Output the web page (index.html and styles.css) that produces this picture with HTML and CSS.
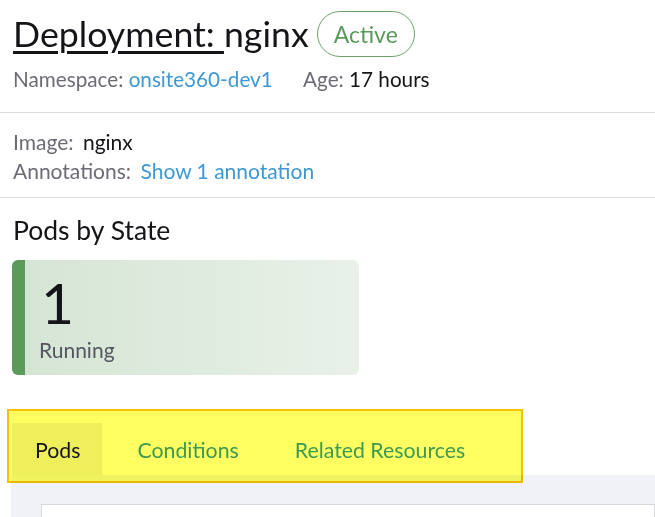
FILE: index.html
```html
<!DOCTYPE html>
<html>
<head>
<meta charset="utf-8">
<link rel="stylesheet" href="styles.css">
</head>
<body>
<div class="page">
  <header class="head">
    <h1 class="title"><a class="kind" href="#">Deployment: </a>nginx</h1>
    <span class="badge">Active</span>
  </header>
  <div class="meta">
    <span class="lbl">Namespace:</span> <a class="link" href="#">onsite360-dev1</a>
    <span class="lbl age">Age:</span> <span class="val">17 hours</span>
  </div>
  <div class="details">
    <div class="row"><span class="lbl">Image:</span> <span class="val">nginx</span></div>
    <div class="row"><span class="lbl">Annotations:</span> <a class="link" href="#">Show 1 annotation</a></div>
  </div>
  <h2 class="section">Pods by State</h2>
  <div class="card">
    <div class="num">1</div>
    <div class="state">Running</div>
  </div>
  <div class="tabs-wrap">
    <nav class="tabs">
      <span class="tab active"><span class="tab-label">Pods</span></span>
      <span class="tab"><span class="tab-label">Conditions</span></span>
      <span class="tab"><span class="tab-label">Related Resources</span></span>
    </nav>
    <div class="panel">
      <div class="inner"></div>
    </div>
    <div class="highlight"></div>
  </div>
</div>
</body>
</html>
```

FILE: styles.css
```css
html, body {
  margin: 0;
  padding: 0;
  background: #fff;
}
body {
  font-family: Lato, "Open Sans", sans-serif;
  color: #141419;
  overflow: hidden;
}
.page {
  width: 655px;
  height: 517px;
  overflow: hidden;
}
.head {
  display: flex;
  align-items: center;
  gap: 8px;
  padding: 11px 0 0 13px;
  height: 46px;
}
.title {
  margin: 0;
  font-size: 35.7px;
  font-weight: 400;
  line-height: 46px;
  color: #141419;
}
.kind {
  color: #141419;
  text-decoration: underline;
  text-decoration-thickness: 3px;
  text-underline-offset: 4px;
}
.badge {
  display: inline-flex;
  align-items: center;
  height: 46px;
  padding: 0 16px;
  border: 1px solid #6aa36a;
  border-radius: 23px;
  color: #5a9a5a;
  font-size: 23px;
  box-sizing: border-box;
}
.meta {
  padding: 8px 0 0 13px;
  font-size: 20.7px;
  line-height: 28px;
  height: 47px;
  border-bottom: 1px solid #dcdce3;
}
.lbl { color: #6c6c76; }
.val { color: #141419; }
.link { color: #3d98d3; text-decoration: none; }
.age { margin-left: 25px; }
.details {
  padding: 14px 0 12px 13px;
  border-bottom: 1px solid #dcdce3;
}
.row {
  font-size: 21px;
  line-height: 29px;
}
.row .lbl { margin-right: 4px; }
.section {
  margin: 0;
  padding: 16px 0 0 13px;
  font-size: 26.5px;
  font-weight: 400;
  line-height: 32px;
  color: #141419;
}
.card {
  margin: 14px 0 0 12px;
  width: 347px;
  height: 115px;
  box-sizing: border-box;
  border-radius: 6px;
  border-left: 13px solid #5b9a5b;
  background: linear-gradient(90deg, #d5e5d5 0%, #e9f1e8 100%);
  padding: 14px 0 0 16px;
}
.num {
  font-size: 57px;
  line-height: 56px;
  color: #141419;
}
.state {
  font-size: 21px;
  line-height: 24px;
  color: #555560;
  margin-left: -2px;
  margin-top: 8px;
}
.tabs-wrap {
  position: relative;
  margin-top: 48px;
}
.tabs {
  display: flex;
  padding-left: 12px;
  height: 52px;
}
.tab {
  display: flex;
  align-items: center;
  padding: 2px 21px 0 35px;
  font-size: 21.3px;
  color: #3d9a52;
}
.tab-label {
  position: relative;
  z-index: 2;
}
.tab.active {
  background: #efefef;
  color: #141419;
  padding: 2px 22px 0 23px;
}
.panel {
  margin-left: 11px;
  background: #f1f2f7;
  padding: 29px 0 0 30px;
  height: 60px;
}
.inner {
  background: #fff;
  border: 1px solid #d8d9e0;
  height: 60px;
}
.highlight {
  position: absolute;
  z-index: 1;
  left: 7px;
  top: -14px;
  width: 516px;
  height: 74px;
  box-sizing: border-box;
  border: 2px solid #f7c300;
  background: #ffff62;
  mix-blend-mode: multiply;
}
```
